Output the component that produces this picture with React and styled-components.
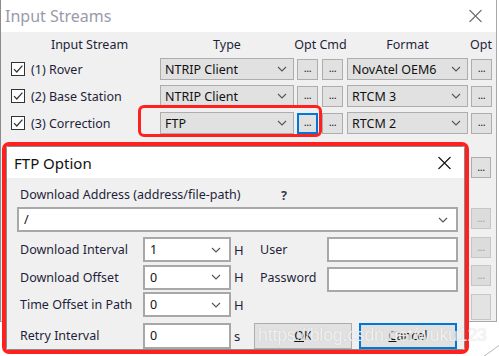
import React from "react";
import styled, { createGlobalStyle } from "styled-components";

const GlobalStyle = createGlobalStyle`
  html, body {
    margin: 0;
    padding: 0;
    background: #ffffff;
  }
  body {
    font-family: "Noto Sans", "Segoe UI", sans-serif;
    font-size: 12.5px;
    color: #1f1f3a;
  }
`;

const streams = [
  { label: "(1) Rover", type: "NTRIP Client", format: "NovAtel OEM6" },
  { label: "(2) Base Station", type: "NTRIP Client", format: "RTCM 3" },
  { label: "(3) Correction", type: "FTP", format: "RTCM 2", focused: true },
];

function Chevron() {
  return (
    <svg width="10" height="6" viewBox="0 0 10 6">
      <path d="M1 1 L5 5 L9 1" fill="none" stroke="#555" strokeWidth="1.1" />
    </svg>
  );
}

function CloseMark({ color }) {
  return (
    <svg width="13" height="13" viewBox="0 0 13 13">
      <path d="M0.5 0.5 L12.5 12.5 M12.5 0.5 L0.5 12.5" stroke={color} strokeWidth="1.1" />
    </svg>
  );
}

function Tick() {
  return (
    <svg width="12" height="12" viewBox="0 0 12 12">
      <path d="M2 6.2 L4.8 9 L10.4 2.6" fill="none" stroke="#333" strokeWidth="1.2" />
    </svg>
  );
}

export default function App() {
  return (
    <Desktop>
      <GlobalStyle />
      <Window>
        <TitleBar>
          <WindowTitle>Input Streams</WindowTitle>
          <CloseBox $right={14}>
            <CloseMark color="#6f6f6f" />
          </CloseBox>
        </TitleBar>
        <WindowBody>
          <StreamGrid>
            <HeadCell $indent>Input Stream</HeadCell>
            <HeadCell>Type</HeadCell>
            <HeadCell $span={2}>Opt Cmd</HeadCell>
            <HeadCell>Format</HeadCell>
            <HeadCell>Opt</HeadCell>
            {streams.map((s) => (
              <React.Fragment key={s.label}>
                <StreamLabel>
                  <CheckBox>
                    <Tick />
                  </CheckBox>
                  {s.label}
                </StreamLabel>
                <Combo>
                  <span>{s.type}</span>
                  <Chevron />
                </Combo>
                <DotButton $focused={s.focused}>...</DotButton>
                <DotButton>...</DotButton>
                <Combo>
                  <span>{s.format}</span>
                  <Chevron />
                </Combo>
                <DotButton>...</DotButton>
              </React.Fragment>
            ))}
          </StreamGrid>
          <RightRail>
            <RailButton $gap={23}>...</RailButton>
            <RailButton $gap={30} $disabled>...</RailButton>
            <RailButton $gap={8} $disabled>...</RailButton>
            <RailButton $gap={7} $disabled>...</RailButton>
            <RailBox />
          </RightRail>
        </WindowBody>
      </Window>

      <Marker />

      <DialogFrame>
        <Dialog>
          <DialogTitleBar>
            <DialogTitle>FTP Option</DialogTitle>
            <CloseBox $right={13}>
              <CloseMark color="#111" />
            </CloseBox>
          </DialogTitleBar>
          <DialogBody>
            <AddressLabel>
              <span>Download Address (address/file-path)</span>
              <span>?</span>
            </AddressLabel>
            <Field $combo>
              <span>/</span>
              <Chevron />
            </Field>
            <FormGrid>
              <FieldLabel>Download Interval</FieldLabel>
              <Field $combo>
                <span>1</span>
                <Chevron />
              </Field>
              <Unit>H</Unit>
              <FieldLabel>User</FieldLabel>
              <Field />

              <FieldLabel>Download Offset</FieldLabel>
              <Field $combo>
                <span>0</span>
                <Chevron />
              </Field>
              <Unit>H</Unit>
              <FieldLabel>Password</FieldLabel>
              <Field $shift={2} />

              <FieldLabel>Time Offset in Path</FieldLabel>
              <Field $combo>
                <span>0</span>
                <Chevron />
              </Field>
              <Unit>H</Unit>
              <span />
              <span />

              <FieldLabel $end>Retry Interval</FieldLabel>
              <Field $end $tall>
                <span>0</span>
              </Field>
              <Unit $end>s</Unit>
              <ButtonRow>
                <DialogButton>
                  <u>O</u>K
                </DialogButton>
                <DialogButton $default>
                  <u>C</u>ancel
                </DialogButton>
              </ButtonRow>
            </FormGrid>
          </DialogBody>
        </Dialog>
      </DialogFrame>

      <Watermark>https://blog.csdn.net/wuku123</Watermark>
      <CornerLine width="20" height="16" viewBox="0 0 20 16">
        <path d="M2 16 L20 3" stroke="#b8b8b8" strokeWidth="1" />
      </CornerLine>
    </Desktop>
  );
}

const Desktop = styled.div`
  position: relative;
  width: 499px;
  height: 356px;
  overflow: hidden;
  background: #ffffff;
`;

const Window = styled.div`
  width: 497px;
  height: 322px;
  box-sizing: border-box;
  display: flex;
  flex-direction: column;
  border-left: 1px solid #8c8c8c;
  border-right: 1px solid #a8a8a8;
  border-bottom: 1px solid #a8a8a8;
  background: #f0f0f0;
`;

const TitleBar = styled.div`
  position: relative;
  height: 32px;
  flex: none;
  display: flex;
  align-items: center;
  padding-left: 4px;
  background: #ffffff;
`;

const WindowTitle = styled.div`
  font-size: 16px;
  color: #9a9aab;
`;

const CloseBox = styled.div`
  position: absolute;
  right: ${(p) => p.$right}px;
  top: 50%;
  transform: translateY(-50%);
  display: flex;
`;

const WindowBody = styled.div`
  flex: 1;
  padding: 4px 0 0 7px;
`;

const StreamGrid = styled.div`
  display: grid;
  grid-template-columns: 149px 134px 22px 22px 121px 20px;
  grid-template-rows: 17px repeat(3, 22px);
  column-gap: 3px;
  row-gap: 5px;
`;

const HeadCell = styled.div`
  grid-column: span ${(p) => p.$span || 1};
  display: flex;
  justify-content: center;
  align-items: center;
  white-space: nowrap;
  padding-left: ${(p) => (p.$indent ? "14px" : "0")};
`;

const StreamLabel = styled.div`
  display: flex;
  align-items: center;
  gap: 6px;
  padding-left: 3px;
  white-space: nowrap;
`;

const CheckBox = styled.div`
  width: 14px;
  height: 14px;
  box-sizing: border-box;
  border: 1px solid #333333;
  background: #ffffff;
  display: flex;
  align-items: center;
  justify-content: center;
`;

const Combo = styled.div`
  display: flex;
  align-items: center;
  justify-content: space-between;
  box-sizing: border-box;
  padding: 0 6px 0 4px;
  background: #e1e1e1;
  border: 1px solid #adadad;
  white-space: nowrap;
  color: #111;
`;

const DotButton = styled.div`
  box-sizing: border-box;
  width: 21px;
  height: 21px;
  align-self: center;
  display: flex;
  align-items: center;
  justify-content: center;
  padding-bottom: 3px;
  font-size: 11px;
  letter-spacing: -0.5px;
  background: ${(p) => (p.$disabled ? "#dcdcdc" : "#e1e1e1")};
  color: ${(p) => (p.$disabled ? "#a0a0a0" : "#222")};
  border: ${(p) =>
    p.$focused ? "2px solid #0078d7" : p.$disabled ? "1px solid #c6c6c6" : "1px solid #adadad"};
`;

const RightRail = styled.div`
  display: flex;
  flex-direction: column;
  margin-left: 463px;
  width: 20px;
`;

const RailButton = styled(DotButton)`
  margin-top: ${(p) => p.$gap}px;
  width: 20px;
`;

const RailBox = styled.div`
  margin-top: 8px;
  width: 20px;
  height: 26px;
  box-sizing: border-box;
  background: #e3e3e3;
  border: 1px solid #c6c6c6;
`;

const Marker = styled.div`
  position: absolute;
  left: 138px;
  top: 105px;
  width: 184px;
  height: 32px;
  box-sizing: border-box;
  border: 3px solid #ff2020;
  border-radius: 6px;
`;

const DialogFrame = styled.div`
  position: absolute;
  left: 2px;
  top: 142px;
  width: 467px;
  height: 212px;
  box-sizing: border-box;
  border: 4px solid #ff2020;
  border-radius: 7px;
  overflow: hidden;
`;

const Dialog = styled.div`
  height: 100%;
  box-sizing: border-box;
  display: flex;
  flex-direction: column;
  border: 1px solid #8a8a8a;
  background: #f0f0f0;
`;

const DialogTitleBar = styled.div`
  position: relative;
  height: 31px;
  flex: none;
  display: flex;
  align-items: center;
  padding-left: 7px;
  background: #ffffff;
`;

const DialogTitle = styled.div`
  font-size: 15px;
  color: #111111;
`;

const DialogBody = styled.div`
  flex: 1;
  padding: 6px 6px 0 10px;
  display: flex;
  flex-direction: column;
`;

const AddressLabel = styled.div`
  display: grid;
  grid-template-columns: 261px auto;
  padding-left: 3px;
  height: 17px;
  align-items: center;
  white-space: nowrap;
  span:last-child {
    font-weight: 700;
    color: #3a3a55;
    padding-top: 3px;
  }
`;

const Field = styled.div`
  box-sizing: border-box;
  height: ${(p) => (p.$tall ? "26px" : "25px")};
  margin-top: ${(p) => p.$shift || 0}px;
  align-self: ${(p) => (p.$end ? "end" : "stretch")};
  display: flex;
  align-items: center;
  justify-content: space-between;
  padding: 0 8px 0 5px;
  background: #ffffff;
  border: 2px solid #a8a8a8;
  color: #111;

  ${AddressLabel} + & {
    margin-top: 6px;
  }
`;

const FormGrid = styled.div`
  margin-top: 5px;
  display: grid;
  grid-template-columns: 126px 88px 26px 70px 131px;
  grid-template-rows: 25px 25px 25px 29px;
  row-gap: 2.5px;
`;

const FieldLabel = styled.div`
  padding-left: 3px;
  display: flex;
  align-items: center;
  align-self: ${(p) => (p.$end ? "end" : "stretch")};
  height: ${(p) => (p.$end ? "26px" : "auto")};
  white-space: nowrap;
`;

const Unit = styled(FieldLabel)`
  padding-left: 3px;
  font-size: 13px;
`;

const ButtonRow = styled.div`
  grid-column: 4 / 6;
  align-self: end;
  display: flex;
  gap: 7px;
  margin-left: -3px;
`;

const DialogButton = styled.div`
  box-sizing: border-box;
  width: 98px;
  height: 26px;
  display: flex;
  align-items: center;
  justify-content: center;
  background: #e1e1e1;
  color: #111;
  border: ${(p) => (p.$default ? "2px solid #0078d7" : "1px solid #adadad")};
`;

const Watermark = styled.div`
  position: absolute;
  left: 258px;
  top: 325px;
  font-family: "Liberation Sans", Arial, sans-serif;
  font-size: 17.5px;
  letter-spacing: -0.1px;
  color: rgba(255, 255, 255, 0.78);
  text-shadow: 0 0 1px rgba(120, 120, 120, 0.35);
  white-space: nowrap;
  pointer-events: none;
`;

const CornerLine = styled.svg`
  position: absolute;
  left: 481px;
  top: 341px;
`;
